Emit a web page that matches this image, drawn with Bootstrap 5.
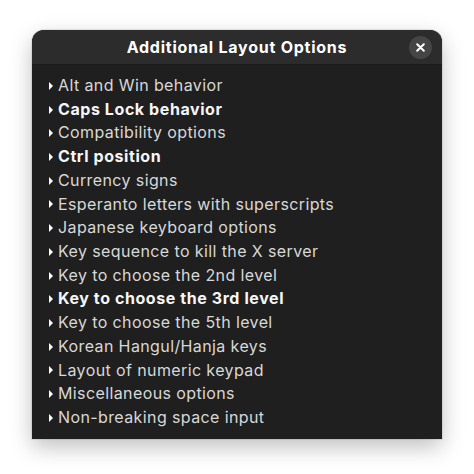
<!DOCTYPE html>
<html lang="en">
<head>
<meta charset="utf-8">
<title>Additional Layout Options</title>
<link href="https://cdn.jsdelivr.net/npm/bootstrap@5.3.0/dist/css/bootstrap.min.css" rel="stylesheet">
<style>
html, body { height: 100%; background: #fff; }
body { padding: 30px 32px 35px; font-family: Inter, "Liberation Sans", sans-serif; overflow: hidden; }
.dlg { width: 410px; height: 409px; background: #1f1f1f; border-radius: 12px 12px 0 0; box-shadow: 0 8px 22px rgba(0,0,0,.25), 0 0 0 1px rgba(0,0,0,.08); overflow: hidden; }
.dlg-head { height: 35px; background: #2c2c2c; border-bottom: 1px solid #1a1a1a; color: #fff; font-size: 16px; font-weight: 700; padding: 0 10px 0 0; }
.dlg-title { flex: 1; text-align: center; padding-left: 33px; line-height: 35px; letter-spacing: .76px; }
.dlg-close { width: 23px; height: 23px; background: #454545; border-radius: 50%; }
.opts { padding: 9px 0 0 17px; }
.opt { height: 23.72px; line-height: 23.72px; font-size: 16px; color: #d8d8d8; gap: 5px; letter-spacing: .39px; white-space: nowrap; }
.opt-on { font-weight: 700; color: #f6f6f6; letter-spacing: .58px; }
.tri { width: 0; height: 0; border-left: 4px solid #fff; border-top: 4.5px solid transparent; border-bottom: 4.5px solid transparent; flex: none; }
</style>
</head>
<body>
<div class="dlg d-flex flex-column">
  <div class="dlg-head d-flex align-items-center">
    <div class="dlg-title">Additional Layout Options</div>
    <div class="dlg-close d-flex align-items-center justify-content-center">
      <svg width="9" height="9" viewBox="0 0 9 9"><path d="M1.2 1.2l6.6 6.6M7.8 1.2l-6.6 6.6" stroke="#fff" stroke-width="2" stroke-linecap="round"/></svg>
    </div>
  </div>
  <div class="opts">
    <div class="opt d-flex align-items-center"><span class="tri"></span><span>Alt and Win behavior</span></div>
    <div class="opt opt-on d-flex align-items-center"><span class="tri"></span><span>Caps Lock behavior</span></div>
    <div class="opt d-flex align-items-center"><span class="tri"></span><span>Compatibility options</span></div>
    <div class="opt opt-on d-flex align-items-center"><span class="tri"></span><span>Ctrl position</span></div>
    <div class="opt d-flex align-items-center"><span class="tri"></span><span>Currency signs</span></div>
    <div class="opt d-flex align-items-center"><span class="tri"></span><span>Esperanto letters with superscripts</span></div>
    <div class="opt d-flex align-items-center"><span class="tri"></span><span>Japanese keyboard options</span></div>
    <div class="opt d-flex align-items-center"><span class="tri"></span><span>Key sequence to kill the X server</span></div>
    <div class="opt d-flex align-items-center"><span class="tri"></span><span>Key to choose the 2nd level</span></div>
    <div class="opt opt-on d-flex align-items-center"><span class="tri"></span><span>Key to choose the 3rd level</span></div>
    <div class="opt d-flex align-items-center"><span class="tri"></span><span>Key to choose the 5th level</span></div>
    <div class="opt d-flex align-items-center"><span class="tri"></span><span>Korean Hangul/Hanja keys</span></div>
    <div class="opt d-flex align-items-center"><span class="tri"></span><span>Layout of numeric keypad</span></div>
    <div class="opt d-flex align-items-center"><span class="tri"></span><span>Miscellaneous options</span></div>
    <div class="opt d-flex align-items-center"><span class="tri"></span><span>Non-breaking space input</span></div>
  </div>
</div>
<script src="https://cdn.jsdelivr.net/npm/bootstrap@5.3.0/dist/js/bootstrap.bundle.min.js"></script>
</body>
</html>
